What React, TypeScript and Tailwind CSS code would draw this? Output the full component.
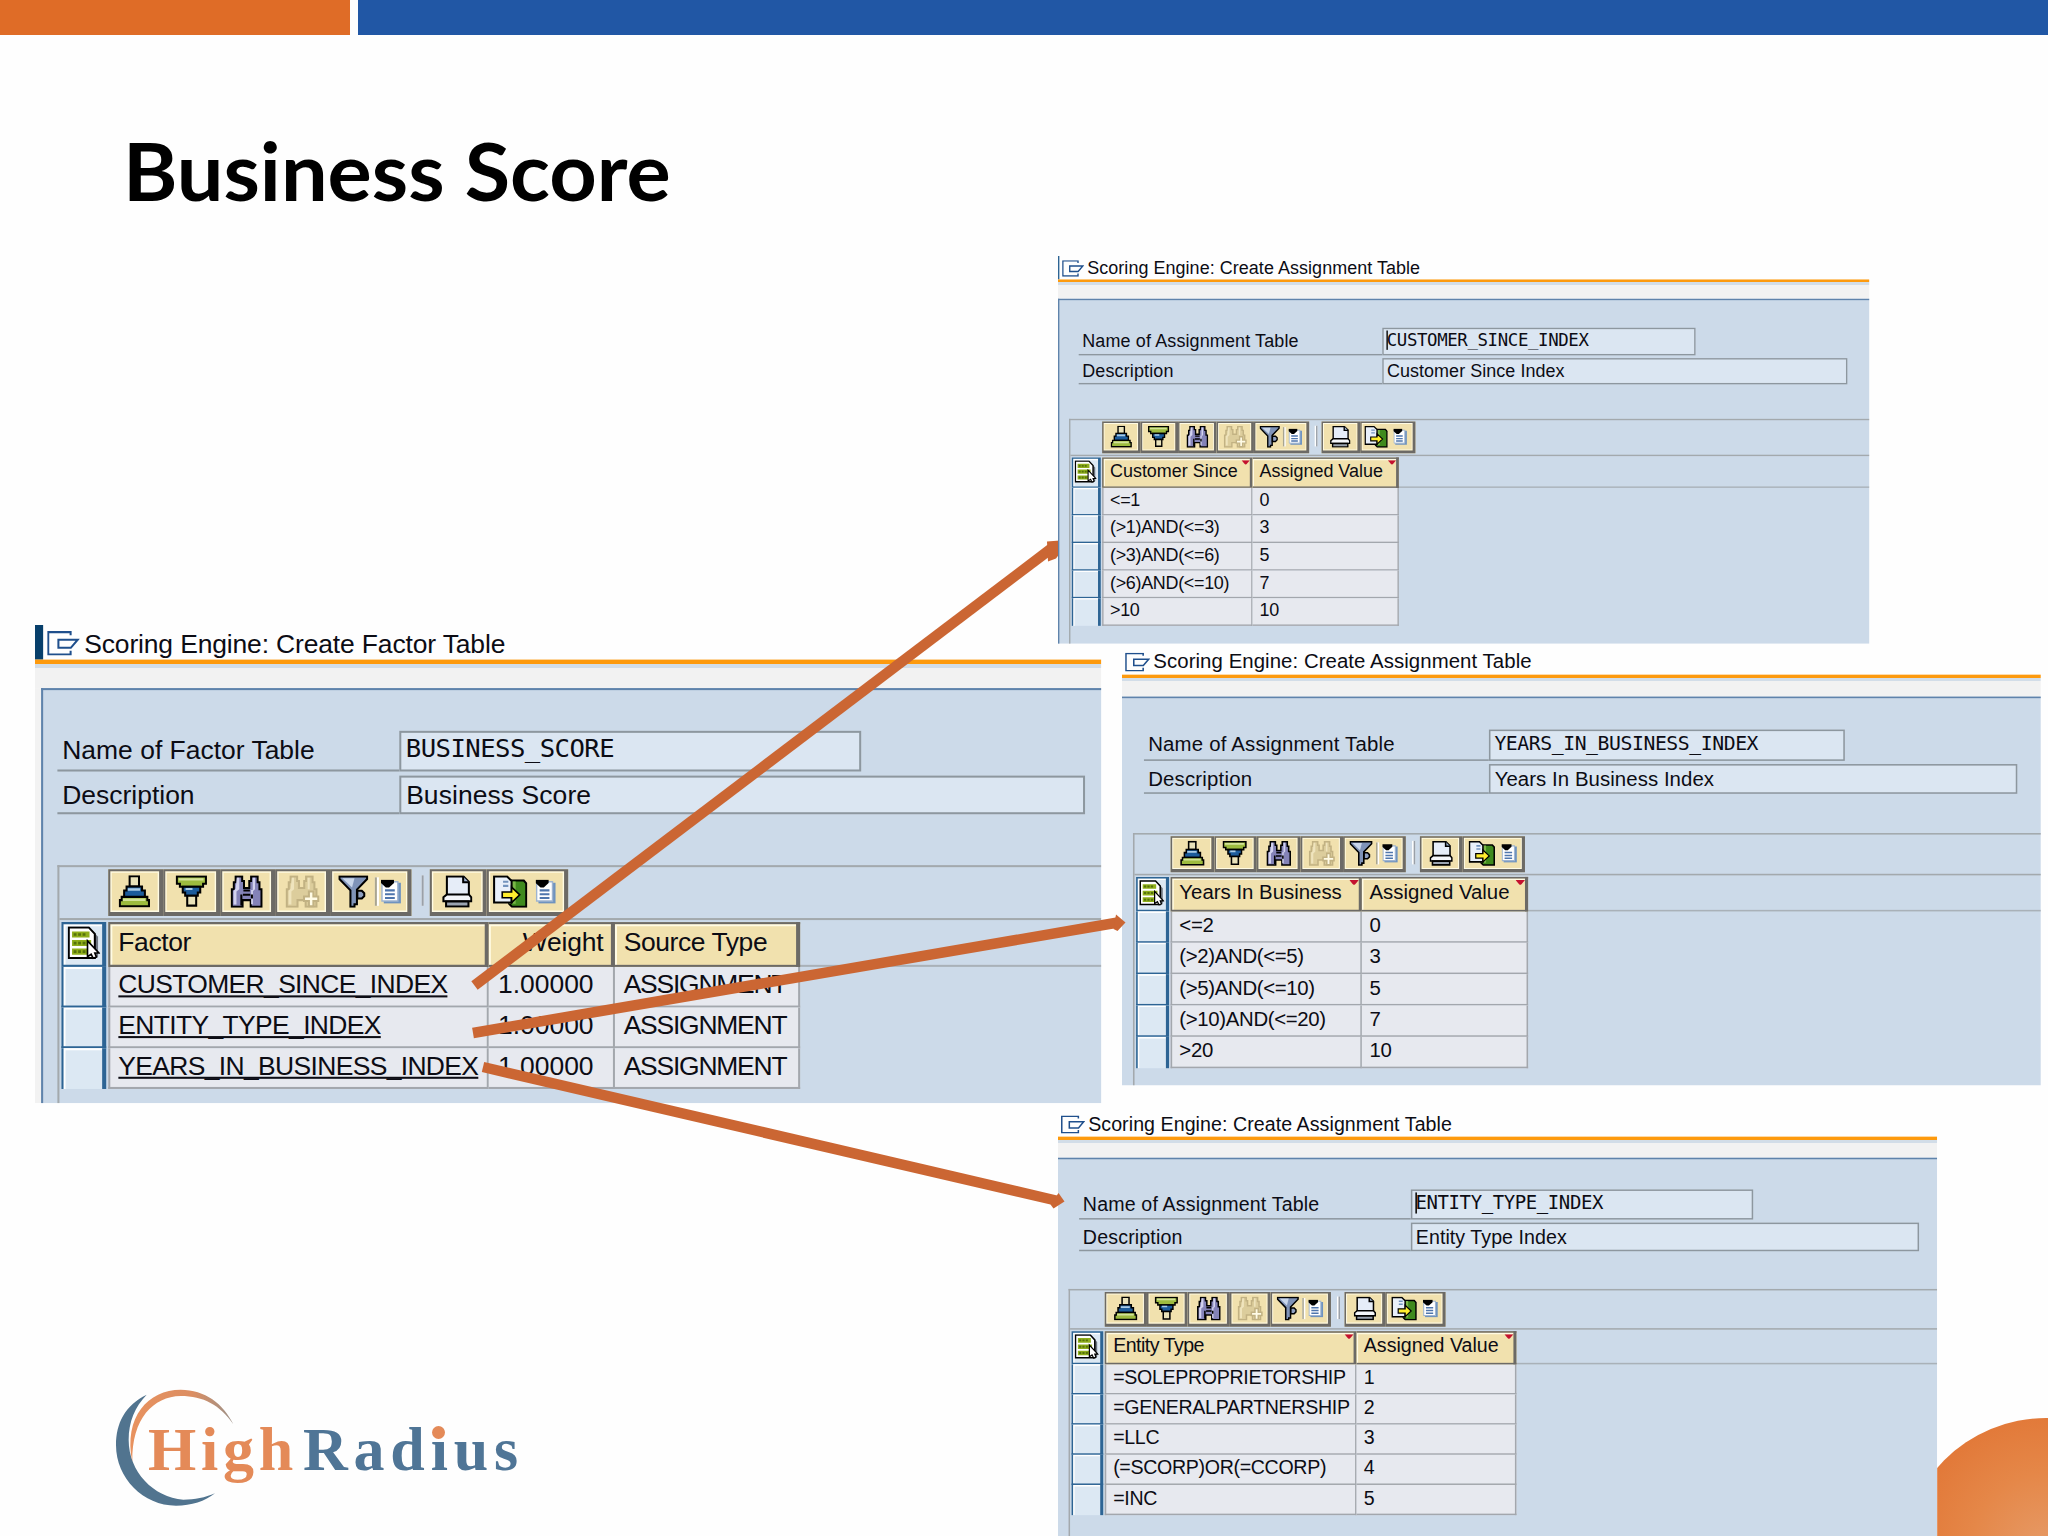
import React from "react";
import clsx from "clsx";

/* ---------- icons (16px grid) ---------- */

function TitleIcon() {
  return (
    <svg className="h-[12px] w-[16px] shrink-0" viewBox="0 0 16 12" fill="none" stroke="#1f4f8c" strokeWidth="1">
      <path d="M11.5 2V.5H.5v11h11V9.6" />
      <path d="M5.5 4.2H15L11.6 8.2H5.5z" />
    </svg>
  );
}

function SortUpIcon() {
  return (
    <svg className="h-[16px] w-[16px]" viewBox="0 0 16 16" stroke="#000" strokeWidth="1">
      <path d="M5.5.5h4.6v5H5.5z" fill="#e9e2ba" />
      <path d="M4 5.5h7.6v2h1.4v3.2H2.8V7.5H4z" fill="#1c5c9c" />
      <path d="M4.6 6.4h6v1.2h-6z" fill="#a9cbe6" stroke="none" />
      <path d="M1.6 10.6h12.6v1.6h.8v3H.7v-3h.9z" fill="#9dbb3f" />
      <path d="M2.2 11.4h11v1.2h-11z" fill="#d3e29a" stroke="none" />
    </svg>
  );
}

function SortDownIcon() {
  return (
    <svg className="h-[16px] w-[16px]" viewBox="0 0 16 16" stroke="#000" strokeWidth="1">
      <path d="M.7.6H15v3.6h-1.4v1.4H2.2V4.2H.7z" fill="#9dbb3f" />
      <path d="M1.6 1.4h12.2v1.1H1.6z" fill="#d3e29a" stroke="none" />
      <path d="M3.6 5.6h8.6v2.8h-1.2V10H4.8V8.4H3.6z" fill="#1c5c9c" />
      <path d="M5 6.2h3.4v1H5z" fill="#a9cbe6" stroke="none" />
      <path d="M5.8 10h4.4v4.9H5.8z" fill="#e9e2ba" />
    </svg>
  );
}

function FindIcon() {
  return (
    <svg className="h-[16px] w-[16px]" viewBox="0 0 16 16" stroke="#000" strokeWidth="1">
      <path
        d="M2.6.6h3.2v2.2h.9v3.4h2.6V2.8h.9V.6h3.2v2.8h.9v3.4h1v8.6H10v-3.2H6v3.2H.7V6.8h1V3.4h.9z"
        fill="#8483b8"
      />
      <path d="M3.2 1.2h1.2v5.6L3 8v6.4H1.6V7.6l1-1zM11 1.2h1.1v5.6l-1 1v6.4h-.9V7.2h.8z" fill="#d2d2ee" stroke="none" />
      <path d="M6.4 7.5h3.2M6.2 9.6h3.6M5.4 9.4v5.4M10.6 9.4v2" />
    </svg>
  );
}

function FindNextIcon() {
  return (
    <svg className="h-[16px] w-[17px]" viewBox="0 0 17 16" stroke="#c2b283" strokeWidth="1">
      <path
        d="M2.6.6h3.2v2.2h.9v3.4h2.6V2.8h.9V.6h3.2v2.8h.9v3.4h1v8.6H10v-3.2H6v3.2H.7V6.8h1V3.4h.9z"
        fill="#dccd9c"
      />
      <path d="M3.2 1.2h1.1v5.6L3 8v6.4H1.6V7.6l1-1zM11 1.2h1v5.6h-1z" fill="#efe4bd" stroke="none" />
      <path d="M11.6 8h2.2v2.4h2.4v2.2h-2.4v2.6h-2.2v-2.6H9.2v-2.2h2.4z" fill="#fffbe6" />
    </svg>
  );
}

function FilterIcon() {
  return (
    <svg className="h-[16px] w-[15px] shrink-0" viewBox="0 0 15 16" stroke="#000" strokeWidth="1">
      <path d="M.6.6h13.6v1.2L9.2 7v7.2H8v1.2H6V7.4L.6 1.8z" fill="#7f93b8" />
      <path d="M2 1.4h6L6.8 6z" fill="#c9d6ea" stroke="none" />
      <path d="M9.4 7.6h2.2l1.2 1.2v1.4l-1.2 1.2H9.4z" fill="#8fa0c0" />
    </svg>
  );
}

function MenuIcon() {
  return (
    <svg className="mt-[0.6px] h-[12px] w-[10px] shrink-0" viewBox="0 0 10 12">
      <path d="M1.4 1.6h8.4v10.2H1.4z" fill="#6f93bf" />
      <path d="M.5 1.2h7.8v9.4H.5z" fill="#fff" stroke="#9fb4d0" strokeWidth="0.7" />
      <path d="M2 5.4h4.8M2 7.3h4.8M2 9.1h4.8" stroke="#4f76ad" strokeWidth="1" />
      <path d="M0 .2h6.4v1.6L4 4H2.4L0 1.8z" fill="#000" />
    </svg>
  );
}

function PrintIcon() {
  return (
    <svg className="h-[16px] w-[15px]" viewBox="0 0 15 16" stroke="#000" strokeWidth="1">
      <path d="M2.4.6h8.2l2.6 2.6v6.6H2.4z" fill="#e6edf8" />
      <path d="M10.4.6v2.8h2.8" fill="#9fb3d0" />
      <path d="M2.4 9.4h10.8l1.2 1.4v2H.7v-2z" fill="#f4f6fa" />
      <path d="M2 12.9h11v2.4H2z" fill="#9aa3b0" />
    </svg>
  );
}

function ExportIcon() {
  return (
    <svg className="h-[16px] w-[17px] shrink-0" viewBox="0 0 17 16" stroke="#000" strokeWidth="1">
      <path d="M8 2.6h7.2l1.2 1.4v11.4H9.4l-1.4-1.4z" fill="#3f8a1e" />
      <path d="M8 3h3.2v11H8z" fill="#7ab648" stroke="none" />
      <path d="M.6.6h6.4l2.2 2.2v10.6H.6z" fill="#e9f0fa" />
      <path d="M5 3.2h2.6M5 5.2h2.6" stroke="#7393bd" />
      <path d="M4.6 8.2h4.6V5.8l4 3.8-4 3.8V11H4.6z" fill="#ffee2e" strokeWidth="0.8" />
    </svg>
  );
}

function SelectAllIcon() {
  return (
    <svg className="h-[17px] w-[16px]" viewBox="0 0 16 17">
      <path d="M11 1.2l4 4V15l-2 1z" fill="#6d7580" />
      <path d="M.6.6h9.8l3 3.2v11.8H.6z" fill="#fff" stroke="#000" />
      <path d="M2.2 2.6h8.6v3H2.2zM2.2 6.8h9.4v3H2.2zM2.2 11h9.4v3H2.2z" fill="#8fae1b" />
      <path d="M3 4.1h6.6M3 8.3h6.6M3 12.5h6.6" stroke="#55720c" strokeWidth="1.3" strokeDasharray="1.4 0.8" />
      <path d="M9.8 7.2v7.8l1.8-1.2 1 2 1.6-.6-.8-2h2z" fill="#fff" stroke="#000" strokeWidth="0.8" />
    </svg>
  );
}

/* ---------- window pieces ---------- */

function ToolButton({ wide, children }: { wide?: boolean; children: React.ReactNode }) {
  return (
    <div
      className={clsx(
        "flex h-[23px] shrink-0 items-center border-t border-r-2 border-b-2 border-l border-[#6c6a66] bg-[#f1e1ae] shadow-[inset_0_0_0_0.7px_#fffbe4]",
        wide ? "w-[40px] pl-[3px]" : "w-[27.4px] justify-center pl-[0.6px]"
      )}
    >
      {children}
    </div>
  );
}

function Toolbar() {
  return (
    <div className="flex h-[26.5px] shrink-0 items-start border-b border-[#a3a9ad] pt-[1.4px] pl-[23.8px]">
      <ToolButton>
        <SortUpIcon />
      </ToolButton>
      <ToolButton>
        <SortDownIcon />
      </ToolButton>
      <ToolButton>
        <FindIcon />
      </ToolButton>
      <ToolButton>
        <FindNextIcon />
      </ToolButton>
      <ToolButton wide>
        <FilterIcon />
        <div className="mr-[1.8px] ml-[2.4px] h-[14px] w-[1.8px] border-l border-[#a9a58f] bg-white" />
        <MenuIcon />
      </ToolButton>
      <div className="mt-[3px] mr-[3px] ml-[4.3px] h-[15px] w-[1.8px] border-r border-[#9aa0a8] bg-white" />
      <ToolButton>
        <PrintIcon />
      </ToolButton>
      <ToolButton wide>
        <div className="-ml-[0.8px] flex items-center gap-[4.4px]">
          <ExportIcon />
          <MenuIcon />
        </div>
      </ToolButton>
    </div>
  );
}

type Column = { title: string; width: string; marker?: boolean; head?: string; cell?: string; link?: boolean };

type WindowProps = {
  frame: string;
  title: string;
  titlePad: string;
  stripe?: string;
  body: string;
  form: string;
  label: string;
  grid: string;
  nameLabel: string;
  name: string;
  description: string;
  caret?: boolean;
  columns: Column[];
  rows: string[][];
};

function SapWindow(props: WindowProps) {
  const { columns, rows } = props;
  return (
    <section
      className={clsx(
        "absolute flex origin-top-left flex-col overflow-hidden bg-[#fefefe] font-['Liberation_Sans',Arial,sans-serif] text-[13px] leading-[15px] whitespace-nowrap text-[#0c0c14]",
        props.frame
      )}
    >
      <div className="flex h-[17px] shrink-0">
        {props.stripe && <div className={props.stripe} />}
        <div className={clsx("flex items-center", props.titlePad)}>
          <TitleIcon />
          <span className="ml-[2px]">{props.title}</span>
        </div>
      </div>
      <div className="h-[14px] shrink-0 bg-[linear-gradient(#fd9a0e_0_2.1px,#d2dde8_2.1px_4px,#f2f2f2_4px)]" />

      <div className="flex flex-1 bg-[#f2f2f2]">
        <div className={clsx("flex flex-1 flex-col border-t border-[#5f83ab] bg-[#ccdae9]", props.body)}>
          <div className={clsx("flex flex-col gap-[2px] pt-[19.8px]", props.form)}>
            <div className="flex h-[19.8px]">
              <div className={clsx("border-b border-[#8d979f] pt-[2.2px]", props.label)}>{props.nameLabel}</div>
              <div className="relative flex w-[226.5px] border border-[#8d979f] bg-[#dbe6f2] pl-[2px] font-['DejaVu_Sans_Mono',monospace] text-[12.6px] tracking-[-0.27px]">
                {props.caret && <i className="absolute top-[1.5px] left-[2px] h-[14px] w-[1px] bg-black" />}
                {props.name}
              </div>
            </div>
            <div className="flex h-[19.8px]">
              <div className={clsx("border-b border-[#8d979f] pt-[2.2px]", props.label)}>Description</div>
              <div className="w-[337px] border border-[#8d979f] bg-[#dbe6f2] pt-[1.3px] pl-[2.2px] tracking-[0.04px]">
                {props.description}
              </div>
            </div>
          </div>

          <div className={clsx("mt-[24.2px] flex flex-1 flex-col border-t border-l border-[#a3a9ad]", props.grid)}>
            <Toolbar />
            <div className="flex h-[22.6px] shrink-0 items-end pl-[1px]">
              <div className="mr-[1px] flex h-[21.6px] w-[21.8px] items-center justify-center border-t border-r-2 border-b border-l border-[#2d6494] bg-[#dce8f3] pl-[0.8px] shadow-[inset_1px_1px_0_#fff]">
                <SelectAllIcon />
              </div>
              {columns.map((col, i) => (
                <div
                  key={col.title}
                  className={clsx(
                    "relative h-[21.6px] border-t border-r-2 border-b border-[#6c6a66] bg-[#f1e1ae] pt-[1.2px] shadow-[inset_1px_1px_0_#fffbe4]",
                    i === 0 ? "border-l pl-[4.2px]" : "pl-[4.6px]",
                    col.width,
                    col.head
                  )}
                >
                  {col.title}
                  {col.marker && (
                    <svg className="absolute top-[0.6px] right-0 h-[3.6px] w-[6px]" viewBox="0 0 6 3.6">
                      <path d="M0 0h6L3 3.6z" fill="#c4112f" />
                    </svg>
                  )}
                </div>
              ))}
              <div className="h-full flex-1 border-b border-[#a9b1b8]" />
            </div>
            {rows.map((row, r) => (
              <div key={r} className="flex h-[20px] shrink-0 pl-[1px]">
                <div
                  className={clsx(
                    "mr-[1px] w-[21.8px] border-r-2 border-l border-[#2d6494] bg-[#dce8f3] shadow-[inset_1px_1px_0_#fff]",
                    r < rows.length - 1 && "border-b"
                  )}
                />
                {row.map((value, i) => (
                  <div
                    key={i}
                    className={clsx(
                      "border-r border-b border-[#a3a7ad] bg-[#e7e9ef] pt-[1.2px]",
                      i === 0 ? "border-l pl-[4.2px]" : "pl-[4.6px]",
                      columns[i].width,
                      columns[i].cell ?? "tracking-[-0.22px]"
                    )}
                  >
                    <span
                      className={clsx(
                        columns[i].link &&
                          "underline decoration-[1px] underline-offset-[1.4px] [text-decoration-skip-ink:none]"
                      )}
                    >
                      {value}
                    </span>
                  </div>
                ))}
              </div>
            ))}
          </div>
        </div>
      </div>
    </section>
  );
}

/* ---------- slide furniture ---------- */

function Arrows() {
  return (
    <svg className="pointer-events-none absolute inset-0 h-[1536px] w-[2048px]" viewBox="0 0 2048 1536">
      <g stroke="#cb6633" strokeWidth="10.5" fill="none">
        <path d="M474.5 985.5L1052 548" />
        <path d="M473 1033L1118 922.5" />
        <path d="M483 1067L1056 1200.5" />
      </g>
      <g fill="#cb6633">
        <path d="M1047 541.5l13-1 2 10-6 8-8 3z" />
        <path d="M1116 914.5l9.5 8-8 8.5-4-2z" />
        <path d="M1058.5 1193l6 8.5-11 7-3-4z" />
      </g>
    </svg>
  );
}

function Logo() {
  return (
    <div className="absolute top-[1360px] left-[90px] h-[176px] w-[460px] font-['Liberation_Serif',serif] text-[62px] leading-[62px] font-bold">
      <svg className="absolute inset-0 h-full w-full" viewBox="0 0 1380 528">
        <defs>
          <linearGradient id="swoosh" x1="0" x2="1">
            <stop offset="0" stopColor="#e8925f" />
            <stop offset="0.6" stopColor="#dc8e62" />
            <stop offset="1" stopColor="#9b9189" />
          </linearGradient>
        </defs>
        <path
          d="M170 104C105 135 78 190 78 255C78 355 160 437 258 437C305 437 345 424 375 400C345 413 315 419 280 419C190 412 116 335 116 240C116 185 135 140 170 104Z"
          fill="#51748f"
        />
        <path
          d="M127 305C100 170 175 89 272 89C345 90 400 130 430 193C390 135 340 108 272 108C190 110 125 175 127 305Z"
          fill="url(#swoosh)"
        />
      </svg>
      <div className="absolute top-[58px] left-[58px] flex whitespace-nowrap">
        <span className="w-[155px] tracking-[4.8px] text-[#e48a58]">High</span>
        <span className="tracking-[5.8px] text-[#4f7596]">Radius</span>
      </div>
      <i className="absolute top-[66px] left-[342px] h-[13px] w-[13px] rounded-full bg-[#e48a58]" />
    </div>
  );
}

export default function App() {
  return (
    <main className="relative h-[1536px] w-[2048px] overflow-hidden bg-[#fefefe]">
      <header>
        <div className="flex h-[34.5px] gap-[8px]">
          <div className="w-[350px] bg-[#df6c27]" />
          <div className="flex-1 bg-[#2157a5]" />
        </div>
        <h1 className="mt-[87px] ml-[123px] w-max origin-left scale-x-[1.035] font-['Lato',sans-serif] text-[80px] leading-[96px] font-bold text-black">
          Business Score
        </h1>
      </header>

      <div className="absolute top-[1418px] left-[1902px] h-[288px] w-[288px] rounded-full bg-[radial-gradient(circle_at_50%_45%,#e69a66_0%,#e58748_35%,#e0702f_80%,#de662a_100%)]" />
      <Logo />

      <SapWindow
        frame="top-[625px] left-[35px] h-[235.4px] w-[524.3px] scale-[2.035]"
        title="Scoring Engine: Create Factor Table"
        titlePad="pl-[2px] pt-[1.4px] tracking-[-0.07px]"
        stripe="w-[4.2px] bg-[#073f6b]"
        body="ml-[3.1px] border-l"
        form="pl-[6.5px]"
        label="w-[168.6px] pl-[2.8px]"
        grid="ml-[6.9px]"
        nameLabel="Name of Factor Table"
        name="BUSINESS_SCORE"
        description="Business Score"
        columns={[
          { title: "Factor", width: "w-[186.8px]", head: "tracking-[-0.2px]", cell: "tracking-[-0.32px]", link: true },
          {
            title: "Weight",
            width: "w-[62.1px]",
            head: "text-right pr-[3.4px] tracking-[-0.1px]",
            cell: "text-right pr-[9.2px]",
          },
          { title: "Source Type", width: "w-[91.6px]", head: "tracking-[-0.2px]", cell: "tracking-[-0.6px]" },
        ]}
        rows={[
          ["CUSTOMER_SINCE_INDEX", "1.00000", "ASSIGNMENT"],
          ["ENTITY_TYPE_INDEX", "1.00000", "ASSIGNMENT"],
          ["YEARS_IN_BUSINESS_INDEX", "1.00000", "ASSIGNMENT"],
        ]}
      />

      <SapWindow
        frame="top-[647.6px] left-[1122px] h-[279.2px] w-[585.6px] scale-[1.568]"
        title="Scoring Engine: Create Assignment Table"
        titlePad="pl-[2px] pt-[0.8px] tracking-[0.04px]"
        body=""
        form="pl-[13.9px]"
        label="w-[220.6px] pl-[2.8px] tracking-[0.12px]"
        grid="ml-[6.6px]"
        nameLabel="Name of Assignment Table"
        name="YEARS_IN_BUSINESS_INDEX"
        description="Years In Business Index"
        columns={[
          { title: "Years In Business", width: "w-[121.8px]", marker: true },
          { title: "Assigned Value", width: "w-[106px]", marker: true },
        ]}
        rows={[
          ["<=2", "0"],
          ["(>2)AND(<=5)", "3"],
          ["(>5)AND(<=10)", "5"],
          ["(>10)AND(<=20)", "7"],
          [">20", "10"],
        ]}
      />

      <SapWindow
        frame="top-[1110.8px] left-[1058.2px] h-[290px] w-[582.6px] scale-[1.508]"
        title="Scoring Engine: Create Assignment Table"
        titlePad="pl-[2px] pt-[0.8px] tracking-[0.04px]"
        body=""
        form="pl-[13.7px]"
        label="w-[220.4px] pl-[2.8px] tracking-[0.1px]"
        grid="ml-[6.6px]"
        nameLabel="Name of Assignment Table"
        name="ENTITY_TYPE_INDEX"
        description="Entity Type Index"
        caret
        columns={[
          { title: "Entity Type", width: "w-[166.8px]", head: "tracking-[-0.35px]", marker: true },
          { title: "Assigned Value", width: "w-[106px]", marker: true },
        ]}
        rows={[
          ["=SOLEPROPRIETORSHIP", "1"],
          ["=GENERALPARTNERSHIP", "2"],
          ["=LLC", "3"],
          ["(=SCORP)OR(=CCORP)", "4"],
          ["=INC", "5"],
        ]}
      />

      <Arrows />

      <SapWindow
        frame="top-[256.2px] left-[1058.2px] h-[281px] w-[588.2px] scale-[1.38]"
        title="Scoring Engine: Create Assignment Table"
        titlePad="pl-[2.2px] pt-[0.8px] tracking-[0.04px]"
        stripe="w-[1px] bg-[#2d6494]"
        body="border-l"
        form="pl-[13.8px]"
        label="w-[220.4px] pl-[2.8px] tracking-[0.1px]"
        grid="ml-[6.7px]"
        nameLabel="Name of Assignment Table"
        name="CUSTOMER_SINCE_INDEX"
        description="Customer Since Index"
        caret
        columns={[
          { title: "Customer Since", width: "w-[109px]", marker: true },
          { title: "Assigned Value", width: "w-[106px]", marker: true },
        ]}
        rows={[
          ["<=1", "0"],
          ["(>1)AND(<=3)", "3"],
          ["(>3)AND(<=6)", "5"],
          ["(>6)AND(<=10)", "7"],
          [">10", "10"],
        ]}
      />
    </main>
  );
}
